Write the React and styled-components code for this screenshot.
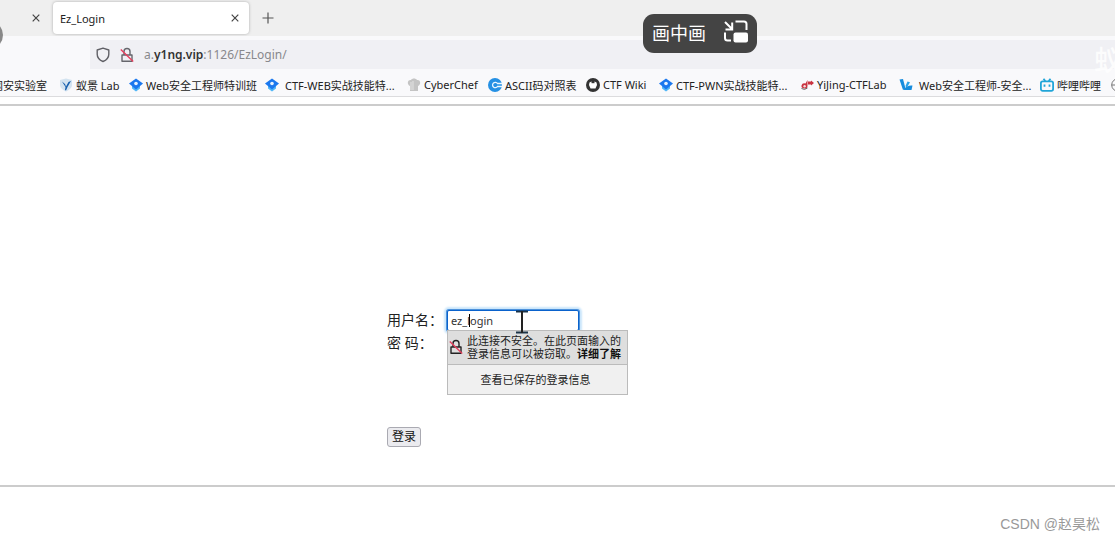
import styled, { createGlobalStyle } from "styled-components";

const bookmarks = [
  { icon: "shield", label: "蚁景 Lab", width: 70 },
  { icon: "gem", label: "Web安全工程师特训班", width: 136 },
  { icon: "gem", label: "CTF-WEB实战技能特...", width: 142, wide: true },
  { icon: "chef", label: "CyberChef", width: 81 },
  { icon: "ascii", label: "ASCII码对照表", width: 98 },
  { icon: "wiki", label: "CTF Wiki", width: 73 },
  { icon: "gem", label: "CTF-PWN实战技能特...", width: 141 },
  { icon: "bird", label: "YiJing-CTFLab", width: 99 },
  { icon: "leaf", label: "Web安全工程师-安全...", width: 141, wide: true },
  { icon: "tv", label: "哔哩哔哩", width: 71 },
  { icon: "globe", label: "", width: 16 },
];

export default function App() {
  return (
    <Wrapper>
      <GlobalStyle />
      <TabStrip>
        <OldTab>
          <TabButton aria-label="关闭标签页">
            <Cross />
          </TabButton>
        </OldTab>
        <ActiveTab>
          <span>Ez_Login</span>
          <TabButton aria-label="关闭标签页">
            <Cross />
          </TabButton>
        </ActiveTab>
        <TabButton aria-label="新建标签页" $large>
          <svg width="12" height="12" viewBox="0 0 12 12">
            <path d="M6 .5v11M.5 6h11" stroke="#555" strokeWidth="1.2" />
          </svg>
        </TabButton>
      </TabStrip>
      <Toolbar>
        <AddressBar role="textbox" aria-label="地址栏">
          <svg width="14" height="16" viewBox="0 0 14 16">
            <path
              d="M7 1.2 12.8 3v4.2c0 3.4-2.3 5.8-5.8 7.3C3.5 13 1.2 10.6 1.2 7.2V3z"
              fill="none"
              stroke="#606066"
              strokeWidth="1.4"
              strokeLinejoin="round"
            />
          </svg>
          <Lock color="#66666c" />
          <Url>
            a.<b>y1ng.vip</b>:1126/EzLogin/
          </Url>
        </AddressBar>
      </Toolbar>
      <Bookmarks>
        <CutBookmark href="#lab">网安实验室</CutBookmark>
        {bookmarks.map((item) => (
          <Bookmark
            href="#bookmark"
            key={item.label}
            aria-label={item.label || "网站"}
            $width={item.width}
            $wide={item.wide}
          >
            <SiteIcon name={item.icon} />
            {item.label}
          </Bookmark>
        ))}
      </Bookmarks>
      <Page>
        <LoginForm onSubmit={(e) => e.preventDefault()}>
          <Row>
            <label htmlFor="user">用户名：</label>
            <Field>
              <TextInput id="user" type="text" defaultValue="ez_login" $active />
              <Caret />
              <Pointer width="14" height="24" viewBox="0 0 14 24">
                <path
                  d="M1 1.5h12M1 22.5h12"
                  stroke="#1c3448"
                  strokeWidth="2"
                />
                <path d="M7 1v22" stroke="#222" strokeWidth="2" />
              </Pointer>
              <Popup>
                <Warning>
                  <Lock color="#222" />
                  <p>
                    此连接不安全。在此页面输入的
                    <br />
                    登录信息可以被窃取。<a href="#more">详细了解</a>
                  </p>
                </Warning>
                <SavedLogins type="button">查看已保存的登录信息</SavedLogins>
              </Popup>
            </Field>
          </Row>
          <Row>
            <label htmlFor="pass">密 码：</label>
            <TextInput id="pass" type="password" />
          </Row>
          <Submit type="submit">登录</Submit>
        </LoginForm>
        <Credit>CSDN @赵昊松</Credit>
      </Page>
      <SideHandle />
      <Watermark>蚁</Watermark>
      <PipButton type="button">
        画中画
        <svg width="26" height="24" viewBox="0 0 26 24" fill="none">
          <path
            d="M2 2l7 7M9.2 2.500v7H2.500"
            stroke="#fff"
            strokeWidth="2"
          />
          <path
            d="M12.500 1.500H21q2.500 0 2.500 2.500v6M2 12.500V18q0 2.500 2.500 2.500H8"
            stroke="#fff"
            strokeWidth="2"
          />
          <rect x="10.5" y="12.5" width="14.5" height="10" rx="2" fill="#fff" />
        </svg>
      </PipButton>
    </Wrapper>
  );
}

function Cross() {
  return (
    <svg width="8" height="8" viewBox="0 0 8 8">
      <path d="M.7.7l6.6 6.6M7.3.7L.7 7.3" stroke="#444" strokeWidth="1.2" />
    </svg>
  );
}

function Lock({ color }) {
  return (
    <svg width="14" height="16" viewBox="0 0 14 16" fill="none">
      <path
        d="M4 8V4.500a3 3 0 0 1 6 0V8M2 8h10v6.3H2z"
        stroke={color}
        strokeWidth="1.4"
        strokeLinejoin="round"
      />
      <path d="M.8 2.500l12.400 12" stroke="#e5405e" strokeWidth="1.4" />
    </svg>
  );
}

function SiteIcon({ name }) {
  return (
    <svg width="14" height="14" viewBox="0 0 14 14">
      {name === "shield" && (
        <>
          <path d="M1 2 7 .5 13 2v5c0 3-3 5-6 6.500C4 12 1 10 1 7z" fill="#d3e3f0" />
          <path d="M3 3.500 6 6l1 2.500L9.500 4l2.500-1L8.500 9 7 12.500 6 12l.5-3z" fill="#155fae" />
        </>
      )}
      {name === "gem" && (
        <>
          <path d="M3 6h8v4.500L7 13.500l-4-3z" fill="#4fb6f7" />
          <path d="M7 .5 14 5.500 7 11.500 0 5.500z" fill="#1b78ee" />
          <circle cx="7" cy="5.500" r="1.800" fill="#e6f3ff" />
        </>
      )}
      {name === "chef" && (
        <>
          <path
            d="M3 13V8C-.5 6 .5 1.500 4 2c1-2 5-2 6 0 3.500-.5 4.500 4 1 6v5z"
            fill="#c4c4c4"
          />
          <path d="M4 4v8M6 3v9" stroke="#dedede" strokeWidth="1.2" />
        </>
      )}
      {name === "ascii" && (
        <>
          <circle cx="7" cy="7" r="7" fill="#2590e4" />
          <path
            d="M14 5.500H9.500a2.700 2.700 0 1 0 0 3H14"
            fill="none"
            stroke="#e8f5ff"
            strokeWidth="1.3"
          />
        </>
      )}
      {name === "wiki" && (
        <>
          <circle cx="7" cy="7" r="7" fill="#333" />
          <path d="M3.500 4.500 5.500 3.500h3l2 1 .5 2.500L9.500 10.500h-5L3 7z" fill="#fff" />
          <path d="M5.500 2.500h3v2.700h-3z" fill="#333" />
        </>
      )}
      {name === "bird" && (
        <>
          <path
            d="M7.500 2v6a3 2.600 0 1 1-2-2.500M8 3.500h3v-1l3 2.500-3 2.500v-1H8z"
            fill="#ca3340"
          />
          <circle cx="4.600" cy="8.300" r="1.200" fill="#f4dcdc" />
          <path d="M1.500 10.500q3 2 6-.5" stroke="#666" fill="none" />
        </>
      )}
      {name === "leaf" && (
        <>
          <path d="M.5 1.500 4 1l2.500 9.500L4 12z" fill="#178cdd" />
          <path d="M6.500 8 8.500 3.500l2.500.7-3.500 6z" fill="#2aa2e8" />
          <path d="M4.500 12q3-5 9-4.500L12.500 12z" fill="#178cdd" />
        </>
      )}
      {name === "tv" && (
        <g stroke="#21a5d8" fill="none" strokeWidth="1.8">
          <rect x=".9" y="3.300" width="12.200" height="9.600" rx="1.800" />
          <path d="M3.500.7 5.300 3M10.500.7 8.700 3M4.500 6.500v2.300M9.500 6.500v2.300" />
        </g>
      )}
      {name === "globe" && (
        <g stroke="#777" fill="none">
          <circle cx="7" cy="7" r="6.300" />
          <path d="M.7 7h12.600M7 .7v12.600" />
        </g>
      )}
    </svg>
  );
}

const GlobalStyle = createGlobalStyle`
  * {
    box-sizing: border-box;
  }
  body {
    margin: 0;
    background: #fff;
    color: #222;
    font-family: "Noto Sans", "Noto Sans CJK SC", sans-serif;
    overflow: hidden;
  }
  button, input {
    font-family: inherit;
  }
  svg {
    flex-shrink: 0;
  }
`;

const Wrapper = styled.div`
  position: relative;
  min-height: 100vh;
  display: flex;
  flex-direction: column;
  overflow: hidden;
`;

const TabStrip = styled.div`
  display: flex;
  align-items: center;
  height: 36px;
  background: #efefef;
`;

const OldTab = styled.div`
  width: 53px;
  display: flex;
  justify-content: flex-end;
  padding-right: 10px;
`;

const ActiveTab = styled.div`
  width: 196px;
  height: 32px;
  display: flex;
  align-items: center;
  justify-content: space-between;
  padding: 0 7px;
  margin-right: 11px;
  background: #fff;
  border-radius: 4px;
  box-shadow: 0 0 3px #aaa;
  font-size: 11px;
`;

const TabButton = styled.button`
  display: flex;
  align-items: center;
  justify-content: center;
  width: ${(props) => (props.$large ? "16px" : "14px")};
  height: 16px;
  padding: 0;
  border: none;
  background: none;
`;

const Toolbar = styled.div`
  padding: 4px 0 4px 90px;
  background: #f9f9fb;
`;

const AddressBar = styled.div`
  display: flex;
  align-items: center;
  gap: 10px;
  height: 29px;
  padding-left: 6px;
  background: #f0f0f4;
`;

const Url = styled.span`
  font-size: 12px;
  color: #88888c;
  b {
    font-weight: 600;
    color: #333;
  }
`;

const Bookmarks = styled.nav`
  display: flex;
  align-items: center;
  height: 24px;
  background: #f9f9fb;
  border-bottom: 1px solid #dcdcde;
  font-size: 11px;
  white-space: nowrap;
  overflow: hidden;
  a {
    color: #222;
    text-decoration: none;
  }
`;

const CutBookmark = styled.a`
  display: flex;
  justify-content: flex-end;
  flex-shrink: 0;
  width: 47px;
  margin-right: 12px;
  overflow: hidden;
`;

const Bookmark = styled.a`
  display: flex;
  align-items: center;
  flex-shrink: 0;
  gap: ${(props) => (props.$wide ? "6px" : "3px")};
  width: ${(props) => props.$width}px;
`;

const Page = styled.main`
  flex: 1;
  display: flex;
  flex-direction: column;
  margin-top: 7px;
  border-top: 2px solid #ccc;
`;

const LoginForm = styled.form`
  padding: 203px 0 38px 387px;
  border-bottom: 2px solid #ccc;
`;

const Row = styled.div`
  display: flex;
  align-items: center;
  height: 23px;
  font-size: 14px;
  line-height: 18px;
  label {
    width: 60px;
    padding-bottom: 2px;
    white-space: nowrap;
  }
`;

const Field = styled.div`
  position: relative;
`;

const TextInput = styled.input`
  display: block;
  width: 132px;
  height: 21px;
  padding: 0 3px;
  border: 1px solid ${(props) => (props.$active ? "#0a62cc" : "#999")};
  border-radius: 2px;
  box-shadow: ${(props) => (props.$active ? "0 0 0 1px #4c92dc, 0 0 2px 3px #cbe6fb" : "none")};
  font-size: 11px;
  color: #333;
  outline: none;
`;

const Caret = styled.i`
  position: absolute;
  left: 22px;
  top: 4px;
  width: 1px;
  height: 13px;
  background: #000;
`;

const Pointer = styled.svg`
  position: absolute;
  left: 68px;
  top: 0;
  z-index: 2;
`;

const Popup = styled.div`
  position: absolute;
  left: 0;
  top: 20px;
  z-index: 1;
  width: 181px;
  border: 1px solid #bbb;
  background: #f0f0f0;
  font-size: 11px;
`;

const Warning = styled.div`
  display: flex;
  align-items: center;
  gap: 4px;
  height: 34px;
  padding: 0 0 1px 1px;
  background: #dedede;
  border-bottom: 1px solid #bbb;
  p {
    margin: 0;
    line-height: 13px;
    white-space: nowrap;
  }
  a {
    font-weight: 700;
    color: #111;
    text-decoration: none;
  }
`;

const SavedLogins = styled.button`
  display: block;
  width: 100%;
  height: 29px;
  padding: 0 4px 2px 0;
  border: none;
  background: none;
  color: #222;
  font-size: 11px;
`;

const Submit = styled.button`
  display: block;
  height: 20px;
  margin-top: 72px;
  padding: 0 4px;
  border: 1px solid #aaaab2;
  border-radius: 3px;
  background: #ebebef;
  color: #111;
  font-size: 12px;
  line-height: 18px;
`;

const Credit = styled.p`
  margin: auto 15px 7px auto;
  font-family: "Liberation Sans", "Noto Sans CJK SC", sans-serif;
  font-size: 14px;
  line-height: 20px;
  color: #999;
`;

const SideHandle = styled.div`
  position: absolute;
  left: -25px;
  top: 21px;
  width: 28px;
  height: 28px;
  border-radius: 50%;
  background: #888;
`;

const Watermark = styled.div`
  position: absolute;
  left: calc(100% - 21px);
  top: 42px;
  font-size: 28px;
  font-weight: 500;
  line-height: 36px;
  color: #fff;
  opacity: 0.8;
`;

const PipButton = styled.button`
  position: absolute;
  right: 358px;
  top: 14px;
  display: flex;
  align-items: center;
  justify-content: space-between;
  width: 114px;
  height: 39px;
  padding: 0 8px 3px 9px;
  border: none;
  border-radius: 11px;
  background: #444;
  color: #fff;
  font-size: 18px;
`;
